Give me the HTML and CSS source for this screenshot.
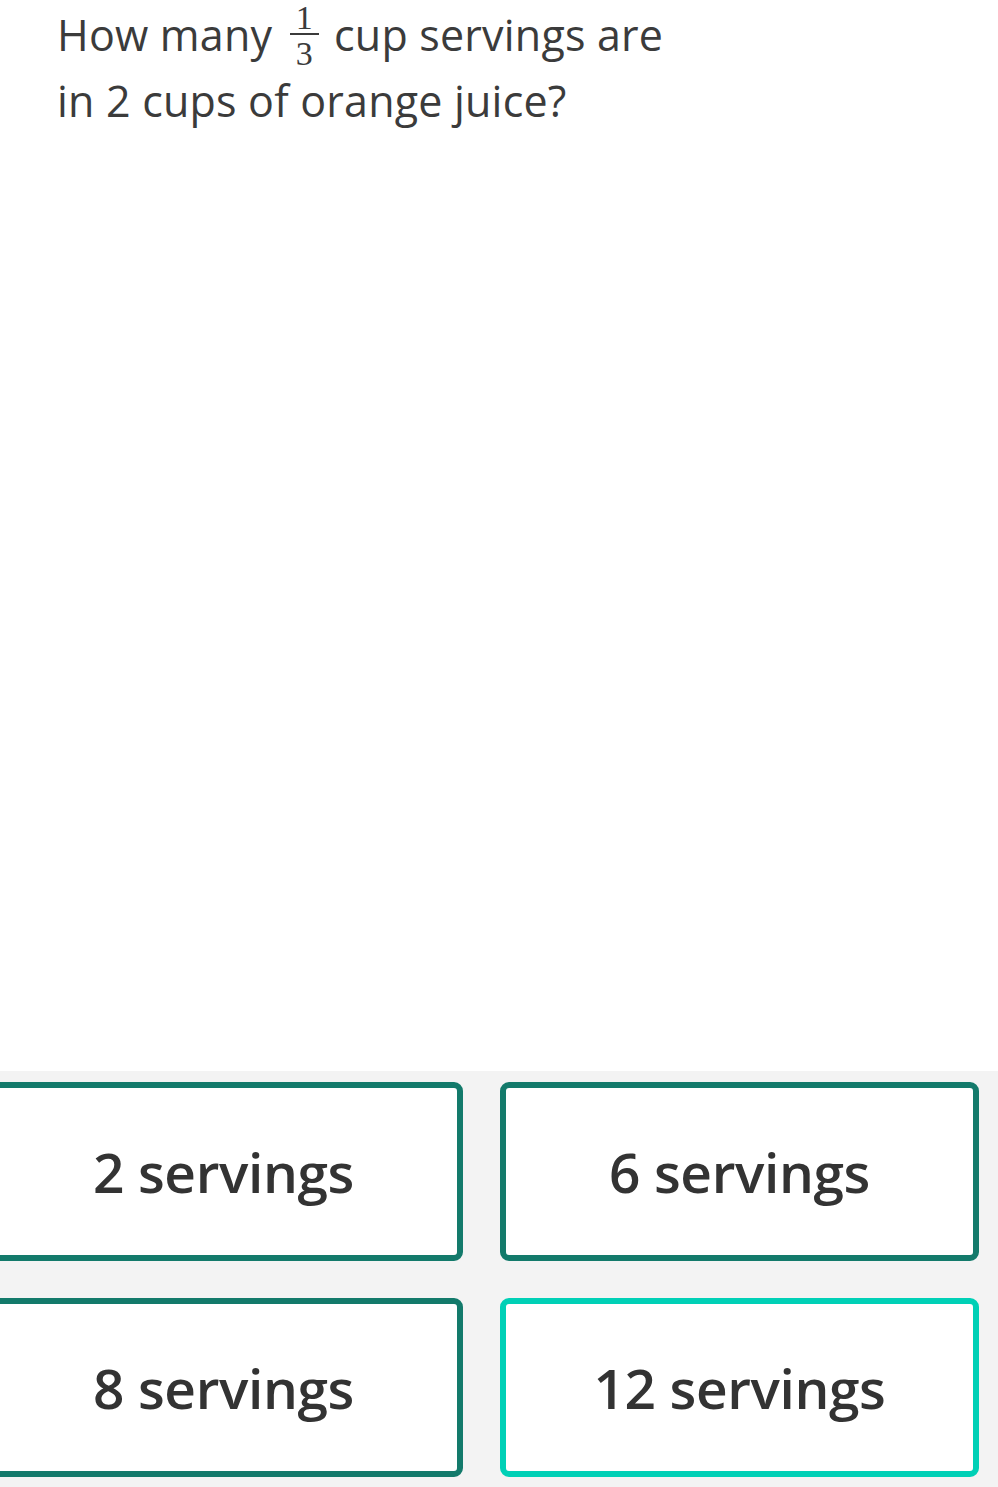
FILE: index.html
```html
<!DOCTYPE html>
<html lang="en">
<head>
  <meta charset="UTF-8">
  <meta name="viewport" content="width=device-width, initial-scale=1.0">
  <title>Question</title>
  <link rel="stylesheet" href="styles.css">
</head>
<body>
  <div class="question">
    <p class="prompt">
      How many
      <span class="frac">
        <span class="num">1</span>
        <span class="den">3</span>
      </span>
      cup servings are<br>in 2 cups of orange juice?
    </p>
  </div>
  <div class="answers">
    <div class="choices">
      <button class="choice">2 servings</button>
      <button class="choice">6 servings</button>
      <button class="choice">8 servings</button>
      <button class="choice selected">12 servings</button>
    </div>
  </div>
</body>
</html>
```

FILE: styles.css
```css
body {
  margin: 0;
  background-color: #fff;
  font-family: "Open Sans", sans-serif;
  color: #333;
  overflow: hidden;
}

.question {
  height: 1071px;
  padding: 0 0 0 57px;
  box-sizing: border-box;
}

.prompt {
  margin: 0;
  padding-top: 2px;
  font-size: 43px;
  line-height: 66px;
  color: #3b3b3b;
  letter-spacing: 0.2px;
}

/* stacked fraction, bar sits a bit above the x-height */
.frac {
  display: inline-flex;
  flex-direction: column;
  align-items: center;
  font-family: "Liberation Serif", serif;
  font-size: 34px;
  line-height: 31px;
  letter-spacing: 0;
  margin: 0 4px -30px 6px;
  position: relative;
  top: -22px;
}

.frac .num {
  border-bottom: 2px solid #3b3b3b;
  padding: 0 6px;
}

.frac .den {
  padding-top: 3px;
}

.answers {
  background-color: #f3f3f3;
  height: 416px;
  padding-top: 11px;
  box-sizing: border-box;
}

.choices {
  margin-left: -16px;
  width: 995px;
  display: grid;
  grid-template-columns: 479px 479px;
  gap: 37px;
}

.choice {
  height: 179px;
  background-color: #fff;
  border: 6px solid #137a6b;
  border-radius: 9px;
  font-family: "Open Sans", sans-serif;
  font-weight: 600;
  font-size: 55px;
  letter-spacing: -0.4px;
  color: #333;
  padding: 0;
}

.choice.selected {
  border-color: #00d0b6;
}
```
